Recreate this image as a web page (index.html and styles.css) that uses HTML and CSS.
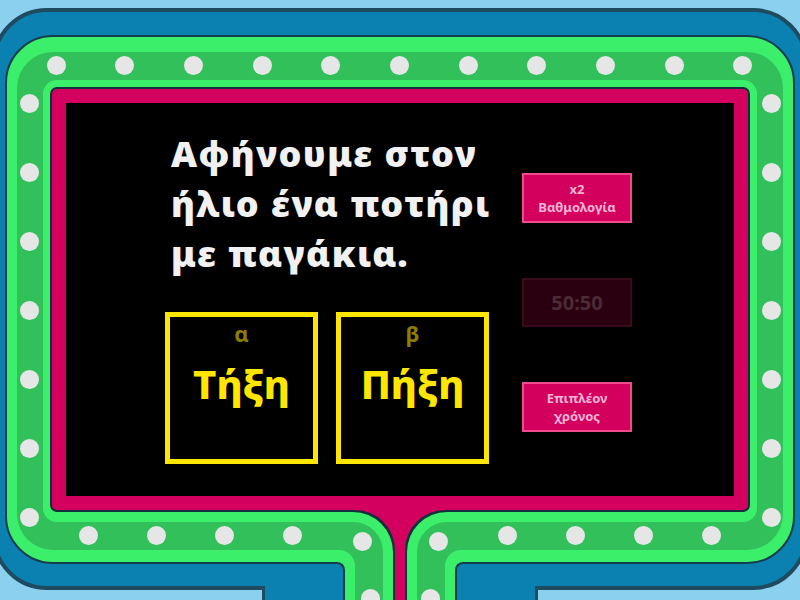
FILE: index.html
```html
<!DOCTYPE html>
<html lang="el">
<head>
<meta charset="utf-8">
<title>Quiz</title>
<link rel="stylesheet" href="styles.css">
</head>
<body>
<div class="scene">
  <div class="tv">
    <div class="frame">
      <div class="lights">
        <div class="ring">
          <div class="screen">
            <div class="display">
              <div class="main-col">
                <div class="question">Αφήνουμε στον ήλιο ένα ποτήρι με παγάκια.</div>
                <div class="answers">
                  <div class="answer"><span class="label">α</span><span class="text">Τήξη</span></div>
                  <div class="answer"><span class="label">β</span><span class="text">Πήξη</span></div>
                </div>
              </div>
              <div class="powerups">
                <div class="power">x2<br>Βαθμολογία</div>
                <div class="power off">50:50</div>
                <div class="power">Επιπλέον<br>χρόνος</div>
              </div>
            </div>
          </div>
        </div>
      </div>
    </div>
  </div>
  <div class="stand"></div>
  <div class="neck"></div>
  <div class="leg leg-left"><div class="leg-mid"><div class="leg-light"><div class="leg-blue"></div></div></div></div>
  <div class="leg leg-right"><div class="leg-mid"><div class="leg-light"><div class="leg-blue"></div></div></div></div>
  <div class="bulbs bulbs-top"><i></i><i></i><i></i><i></i><i></i><i></i><i></i><i></i><i></i><i></i><i></i></div>
  <div class="bulbs bulbs-col bulbs-left"><i></i><i></i><i></i><i></i><i></i><i></i><i></i></div>
  <div class="bulbs bulbs-col bulbs-right"><i></i><i></i><i></i><i></i><i></i><i></i><i></i></div>
  <div class="bulbs bulbs-bottom bulbs-bl"><i></i><i></i><i></i><i></i></div>
  <div class="bulbs bulbs-bottom bulbs-br"><i></i><i></i><i></i><i></i></div>
  <div class="bulb bulb-l1"></div>
  <div class="bulb bulb-l2"></div>
  <div class="bulb bulb-r1"></div>
  <div class="bulb bulb-r2"></div>
</div>
</body>
</html>
```
FILE: styles.css
```css
* { box-sizing: border-box; }
body {
  margin: 0;
  background: #8bd0ee;
  font-family: "Noto Sans", "DejaVu Sans", sans-serif;
}
.scene {
  position: relative;
  width: 800px;
  height: 600px;
  overflow: hidden;
  padding-top: 8px;
  background: #8bd0ee;
}
.tv {
  width: 816px;
  height: 582px;
  margin-left: -8px;
  border: 4px solid #1f4b61;
  border-radius: 55px;
  background: #0a81b1;
  padding: 23px 9px 22px;
}
.frame {
  border: 2px solid #163d4d;
  border-radius: 48px;
  background: #3cef6a;
  padding: 15px 10px 12px;
}
.lights {
  background: #31c05a;
  border-radius: 36px;
  padding: 28px 26px;
}
.ring {
  background: #3cef6a;
  border-radius: 14px;
  padding: 7px 7px 10px;
}
.screen {
  border: 2px solid #12303c;
  border-radius: 7px;
  background: #d4005f;
  padding: 14px;
}
.display {
  background: #000;
  height: 393px;
  display: flex;
  align-items: flex-start;
  gap: 33px;
  padding: 26px 0 0 99px;
}
.main-col { width: 324px; }
.question {
  width: 330px;
  margin-left: 6px;
  color: #f1f1f1;
  font-weight: 900;
  font-size: 36px;
  line-height: 50px;
  letter-spacing: 1.4px;
}
.answers {
  display: flex;
  gap: 18px;
  margin-top: 33px;
}
.answer {
  width: 153px;
  height: 152px;
  border: 5px solid #ffe600;
  display: flex;
  flex-direction: column;
  align-items: center;
  padding-top: 3px;
}
.label {
  color: #8a7f00;
  font-size: 22px;
  font-weight: 700;
  line-height: 26px;
}
.text {
  color: #ffe600;
  font-size: 40px;
  font-weight: 800;
  line-height: 48px;
  margin-top: 14px;
}
.powerups {
  width: 110px;
  display: flex;
  flex-direction: column;
  gap: 55px;
  padding-top: 44px;
}
.power {
  height: 50px;
  background: #d3005e;
  border: 2px solid #ee4c8e;
  color: #f7b4d4;
  font-weight: 700;
  font-size: 13px;
  line-height: 18px;
  display: flex;
  align-items: center;
  justify-content: center;
  text-align: center;
}
.power.off {
  height: 49px;
  background: #2a0011;
  border-color: #3a0b1d;
  color: #4a2b36;
  font-size: 20px;
}
.stand {
  position: absolute;
  left: 262px;
  top: 586px;
  width: 276px;
  height: 30px;
  background: #0a81b1;
  border-left: 3px solid #1f4b61;
  border-right: 3px solid #1f4b61;
}
.neck {
  position: absolute;
  left: 345px;
  top: 508px;
  width: 110px;
  height: 100px;
  background: #d4005f;
}
.leg {
  position: absolute;
  top: 512px;
  width: 88px;
  height: 100px;
  background: #3cef6a;
}
.leg-mid { height: 100%; background: #31c05a; }
.leg-light { height: 100%; background: #3cef6a; }
.leg-blue { height: 100%; background: #0a81b1; border-top: 2px solid #163d4d; }
.leg-left {
  left: 305px;
  border-top-right-radius: 40px;
  padding: 10px 10px 0 0;
  box-shadow: 2px -2px 0 #12303c;
}
.leg-left .leg-mid { border-top-right-radius: 30px; padding: 28px 28px 0 0; }
.leg-left .leg-light { border-top-right-radius: 16px; padding: 12px 10px 0 0; }
.leg-left .leg-blue { border-right: 2px solid #163d4d; border-top-right-radius: 8px; }
.leg-right {
  left: 407px;
  border-top-left-radius: 40px;
  padding: 10px 0 0 10px;
  box-shadow: -2px -2px 0 #12303c;
}
.leg-right .leg-mid { border-top-left-radius: 30px; padding: 28px 0 0 28px; }
.leg-right .leg-light { border-top-left-radius: 16px; padding: 12px 0 0 10px; }
.leg-right .leg-blue { border-left: 2px solid #163d4d; border-top-left-radius: 8px; }

.bulbs { position: absolute; display: flex; }
.bulbs i, .bulb {
  display: block;
  width: 19px;
  height: 19px;
  border-radius: 50%;
  background: #e6e6e6;
}
.bulbs-top { left: 46.5px; top: 55.5px; gap: 49.7px; }
.bulbs-col { flex-direction: column; top: 93.5px; gap: 50px; }
.bulbs-left { left: 19.5px; }
.bulbs-right { left: 761.5px; }
.bulbs-bottom { top: 525.5px; gap: 49.3px; }
.bulbs-bl { left: 78.5px; }
.bulbs-br { left: 497.5px; }
.bulb { position: absolute; }
.bulb-l1 { left: 352.5px; top: 531.5px; }
.bulb-l2 { left: 360.5px; top: 588.5px; }
.bulb-r1 { left: 428.5px; top: 531.5px; }
.bulb-r2 { left: 420.5px; top: 588.5px; }
```
